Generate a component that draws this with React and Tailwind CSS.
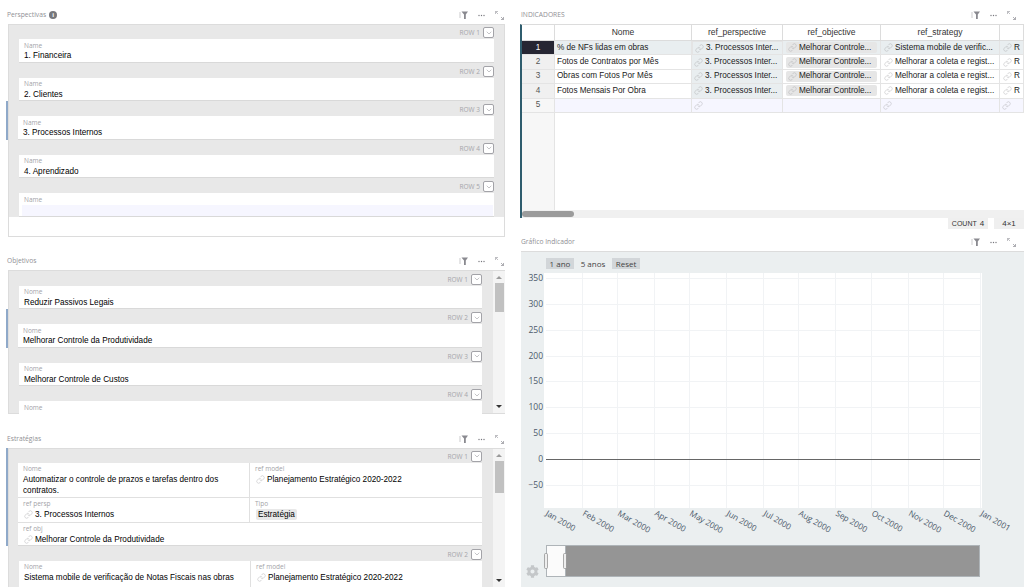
import React from "react";
import { Link, ChevronDown } from "lucide-react";
import { FaCog } from "react-icons/fa";

const sans = "font-['Liberation_Sans',Arial,sans-serif]";
const label = "font-['Open_Sans',sans-serif]";

const WidgetIcons = () => (
    <div className="flex items-center gap-[10px] text-[#929299]">
        <svg width="9" height="8" viewBox="0 0 9 8">
            <path d="M0 2h2M0 4h2M0 6h2" stroke="#b4b4b8" strokeWidth="0.700" />
            <path d="M2.500 0.500h6.500L6.800 3.500V8H5V3.500Z" fill="#8a8a90" />
        </svg>
        <svg width="7" height="3" viewBox="0 0 7 3">
            <circle cx="1" cy="1.500" r="0.700" fill="#77777d" />
            <circle cx="3.500" cy="1.500" r="0.700" fill="#77777d" />
            <circle cx="6" cy="1.500" r="0.700" fill="#77777d" />
        </svg>
        <svg width="9" height="9" viewBox="0 0 9 9" fill="none">
            <path d="M0.500 0.500H3M0.500 0.500V3M0.500 0.500L3 3" stroke="#a5a5aa" strokeWidth="0.700" />
            <path d="M8.500 8.500H6M8.500 8.500V6M8.500 8.500L6 6" stroke="#8d8d93" strokeWidth="0.700" />
        </svg>
    </div>
);

const WidgetTitle = ({ title, info, className = "pl-[7px] pr-[1px]" }) => (
    <div className={`flex h-[24px] items-center justify-between pt-[6px] ${className}`}>
        <div className={`${label} flex items-center gap-[3px] text-[6.700px] text-[#8f8f94]`}>
            {title}
            {info && (
                <span className="flex h-[8px] w-[8px] items-center justify-center rounded-full bg-[#77777c] text-[6px] font-bold leading-none text-white">
                    i
                </span>
            )}
        </div>
        <WidgetIcons />
    </div>
);

const RowStrip = ({ row }) => (
    <div className="flex h-[15px] items-end justify-end gap-[3px] pb-[1px]">
        <span className={`${label} text-[6.500px] leading-[11px] text-[#a5a5aa]`}>ROW {row}</span>
        <span className="flex h-[11px] w-[11px] items-center justify-center rounded-[2px] border border-[#a3a3a8] bg-white">
            <ChevronDown size={8} strokeWidth={1.500} className="text-[#8a8a90]" />
        </span>
    </div>
);

const Field = ({ name, value, empty, className = "" }) => (
    <div className={`flex min-w-0 flex-col px-[5px] pt-[1.500px] ${className}`}>
        <div className={`${label} h-[9px] text-[6.500px] leading-[9px] text-[#a3a3a8]`}>{name}</div>
        {empty ? (
            <div className="-ml-[2px] -mr-[4px] mt-[1px] h-[12px] bg-[#f6f6ff]" />
        ) : (
            <div className={`${sans} mt-[0.500px] text-[8.200px] leading-[11px] text-[#000]`}>{value}</div>
        )}
    </div>
);

const RefValue = ({ children }) => (
    <span className="flex items-center gap-[2px] pl-[1px]">
        <Link size={9} strokeWidth={1.100} className="shrink-0 text-[#a8a8ac]" />
        {children}
    </span>
);

const Card = ({ active, children }) => (
    <div className={`relative border-b border-[#d9d9d9] bg-white ${active ? "-ml-[1px]" : ""}`}>{children}</div>
);

const Row = ({ row, active, children }) => (
    <div className="relative pl-[10px]">
        {active && <div className="absolute -left-[3px] top-0 h-full w-[2px] bg-[#8fa9c9]" />}
        <RowStrip row={row} />
        <Card active={active}>{children}</Card>
    </div>
);

const Scrollbar = ({ thumb }) => (
    <div className="flex w-[12px] shrink-0 flex-col items-center bg-[#f4f4f4] pt-[5px]">
        <div className="h-0 w-0 border-x-[3px] border-b-[3px] border-x-transparent border-b-[#9b9b9b]" />
        <div className={`mt-[4px] w-[9px] bg-[#c1c1c1] ${thumb}`} />
        <div className="flex-1" />
        <div className="mb-[5px] h-0 w-0 border-x-[3px] border-t-[3px] border-x-transparent border-t-[#333]" />
    </div>
);

const Perspectivas = () => (
    <div className="flex h-[213px] flex-col border border-[#dcdcdc] bg-white">
        <div className="h-[192px] bg-[#e8e8e8] pr-[10px]">
            <div className="-mt-[1px]">
                {["1. Financeira", "2. Clientes", "3. Processos Internos", "4. Aprendizado", ""].map((value, i) => (
                    <Row key={i} row={i + 1} active={i === 2}>
                        <Field name="Name" value={value} empty={i === 4} className="h-[22.500px]" />
                    </Row>
                ))}
            </div>
        </div>
    </div>
);

const Objetivos = () => (
    <div className="flex h-[144px] border-y border-l border-[#dcdcdc] bg-[#e8e8e8] [clip-path:inset(0_0_0_-4px)]">
        <div className="-mt-[0.500px] flex-1 pr-[11px]">
            {["Reduzir Passivos Legais", "Melhorar Controle da Produtividade", "Melhorar Controle de Custos", ""].map((value, i) => (
                <Row key={i} row={i + 1} active={i === 1}>
                    <Field name="Nome" value={value} className="h-[22.500px]" />
                </Row>
            ))}
        </div>
        <Scrollbar thumb="h-[29px]" />
    </div>
);

const Estrategias = () => (
    <div className="flex h-[139px] border-l border-t border-[#dcdcdc] bg-[#e8e8e8] [clip-path:inset(0_0_0_-4px)]">
        <div className="-mt-[1.500px] min-w-0 flex-1 pr-[11px]">
            <Row row={1} active>
                <div className="grid grid-cols-[232px_1fr]">
                    <Field name="Nome" value="Automatizar o controle de prazos e tarefas dentro dos contratos." className="h-[35px] border-b border-r border-[#e0e0e0]" />
                    <Field name="ref model" value={<RefValue>Planejamento Estratégico 2020-2022</RefValue>} className="h-[35px] border-b border-[#e0e0e0]" />
                    <Field name="ref persp" value={<RefValue>3. Processos Internos</RefValue>} className="h-[25px] border-b border-r border-[#e0e0e0]" />
                    <Field
                        name="Tipo"
                        value={<span className="ml-[1px] inline-block rounded-[2px] bg-[#e8e8e8] px-[2px]">Estratégia</span>}
                        className="h-[25px] border-b border-[#e0e0e0]"
                    />
                    <Field name="ref obj" value={<RefValue>Melhorar Controle da Produtividade</RefValue>} className="col-span-2 h-[22px]" />
                </div>
            </Row>
            <Row row={2}>
                <div className="grid grid-cols-[232px_1fr]">
                    <Field name="Nome" value="Sistema mobile de verificação de Notas Fiscais nas obras" className="h-[35px] border-r border-[#e0e0e0]" />
                    <Field name="ref model" value={<RefValue>Planejamento Estratégico 2020-2022</RefValue>} className="h-[35px]" />
                </div>
            </Row>
        </div>
        <Scrollbar thumb="h-[32px]" />
    </div>
);

const rows = [
    ["% de NFs lidas em obras", "Sistema mobile de verific..."],
    ["Fotos de Contratos por Mês", "Melhorar a coleta e regist..."],
    ["Obras com Fotos Por Mês", "Melhorar a coleta e regist..."],
    ["Fotos Mensais Por Obra", "Melhorar a coleta e regist..."],
];

const cell = `${sans} flex h-[14.400px] items-center overflow-hidden whitespace-nowrap border-b border-r border-[#e4e4e4] text-[8.200px] text-[#1a1a1a]`;
const head = `${sans} flex h-[16px] items-center justify-center border-b border-r border-[#dcdcdc] bg-white text-[8.500px] text-[#333]`;

const Indicadores = () => (
    <div className="flex h-[194px] flex-col border-l-2 border-[#2f5d6e] border-t border-t-[#dcdcdc]">
        <div className="flex-1 overflow-hidden">
            <div className="relative grid grid-cols-[33px_137px_91px_98px_119px_24px]">
                <div className={`${head} bg-[#f7f7f7]`} />
                <div className={head}>Nome</div>
                <div className={head}>ref_perspective</div>
                <div className={head}>ref_objective</div>
                <div className={head}>ref_strategy</div>
                <div className={head} />
                {rows.map(([name, strategy], i) => {
                    const bg = i === 0 ? "bg-[#e9eef0]" : "bg-white";
                    return (
                        <React.Fragment key={i}>
                            <div className={`${cell} justify-center ${i === 0 ? "bg-[#262633] text-white" : "bg-[#f0f0f0] text-[#555]"}`}>{i + 1}</div>
                            <div className={`${cell} ${bg} pl-[2px]`}>{name}</div>
                            <div className={`${cell} bg-[#e9eef0] pl-[1px] ${i === 0 ? "border border-[#2f5d6e]" : ""}`}>
                                <RefValue>3. Processos Inter...</RefValue>
                            </div>
                            <div className={`${cell} ${bg} px-[3px]`}>
                                <div className="flex h-[11px] w-full items-center rounded-[2px] bg-[#e6e6e6] pl-[1px]">
                                    <RefValue>Melhorar Controle...</RefValue>
                                </div>
                            </div>
                            <div className={`${cell} ${bg} pl-[2px]`}>
                                <RefValue>{strategy}</RefValue>
                            </div>
                            <div className={`${cell} ${bg} pl-[2px]`}>
                                <RefValue>R</RefValue>
                            </div>
                        </React.Fragment>
                    );
                })}
                <div className={`${cell} justify-center bg-[#f7f7f7] text-[#555]`}>5</div>
                <div className={`${cell} bg-[#f6f6ff]`} />
                {[0, 1, 2, 3].map((i) => (
                    <div key={i} className={`${cell} bg-[#f6f6ff] pl-[2px]`}>
                        {i !== 1 && <Link size={9} strokeWidth={1.100} className="text-[#a8a8ac]" />}
                    </div>
                ))}
            </div>
            <div className="h-full w-[33px] border-r border-[#e4e4e4] bg-[#f7f7f7]" />
        </div>
        <div className="relative h-[8px] shrink-0 bg-[#f0f0f0]">
            <div className="absolute left-0 top-[0.500px] h-[6px] w-[52px] rounded-full bg-[#9b9b9b]" />
        </div>
    </div>
);

const Summary = () => (
    <div className={`${sans} flex h-[11px] justify-end gap-[6px] text-[8px] leading-[11px] text-[#333]`}>
        <span className="flex w-[40px] items-center justify-center gap-[3px] bg-[#efefef]">
            <span className="text-[7px]">COUNT</span> 4
        </span>
        <span className="w-[30px] bg-[#efefef] text-center">4×1</span>
    </div>
);

const gridXs = [582, 617, 654, 689, 726, 763, 798, 835, 871, 908, 943, 980];
const ticks = [
    [350, 277],
    [300, 303],
    [250, 329],
    [200, 355],
    [150, 380],
    [100, 406],
    [50, 432],
    [0, 458],
    [-50, 484],
];
const months = ["Jan 2000", "Feb 2000", "Mar 2000", "Apr 2000", "May 2000", "Jun 2000", "Jul 2000", "Aug 2000", "Sep 2000", "Oct 2000", "Nov 2000", "Dec 2000", "Jan 2001"];

// plot is drawn in page coordinates, shifted by the panel origin
const Chart = () => (
    <svg width="503" height="336" viewBox="521 251 503 336" className="absolute left-0 top-0">
        <rect x="544" y="272" width="438" height="235" fill="#fff" />
        {gridXs.map((x) => (
            <line key={x} x1={x + 0.5} x2={x + 0.5} y1="272" y2="507" stroke="#f1f3f5" strokeWidth="1" />
        ))}
        {ticks.map(([v, y]) => (
            <g key={v}>
                <line x1="546" x2="980" y1={y + 0.5} y2={y + 0.5} stroke={v === 0 ? "#666" : "#f1f3f5"} strokeWidth="1" />
                <text x="543" y={y + 3} textAnchor="end" fontSize="8.500" fill="#4b5a6b" fontFamily="Open Sans, sans-serif">
                    {v < 0 ? `−${-v}` : v}
                </text>
            </g>
        ))}
        {months.map((m, i) => {
            const x = i === 0 ? 545 : i === 12 ? 980 : gridXs[i - 1];
            return (
                <text key={i} transform={`translate(${x} 514) rotate(30)`} fontSize="8.200" fill="#4b5a6b" fontFamily="Open Sans, sans-serif">
                    {m}
                </text>
            );
        })}
        <rect x="546.500" y="544.500" width="433" height="31" fill="#959595" stroke="#aeb4b8" strokeWidth="1" />
        <rect x="546.500" y="544.500" width="19" height="31" fill="#fbfbfb" stroke="#aeb4b8" />
        <rect x="544.500" y="552.500" width="3" height="15" rx="1" fill="#eee" stroke="#8a8a8a" strokeWidth="0.700" />
        <rect x="563.500" y="552.500" width="3" height="15" rx="1" fill="#eee" stroke="#8a8a8a" strokeWidth="0.700" />
    </svg>
);

const RangeButton = ({ on, children }) => (
    <span className={`flex h-[11px] w-[28px] items-center justify-center text-[8px] text-[#444] ${on ? "bg-[#d2d6d9]" : ""}`}>{children}</span>
);

const Grafico = () => (
    <div className="relative ml-[1px] h-[336px] overflow-hidden border-t border-[#dcdcdc] bg-[#ebeff0]">
        <Chart />
        <div className={`${label} relative ml-[25px] mt-[6px] flex gap-[5px]`}>
            <RangeButton on>1 ano</RangeButton>
            <RangeButton>5 anos</RangeButton>
            <RangeButton on>Reset</RangeButton>
        </div>
        <FaCog size={13} className="absolute left-[5px] top-[313px] text-[#c4c7c9]" />
    </div>
);

export default function App() {
    return (
        <div className="flex h-[587px] w-[1024px] overflow-hidden bg-white">
            <div className="flex w-[505px] shrink-0 flex-col pl-[8px]">
                <div className="-ml-[8px]">
                    <WidgetTitle title="Perspectivas" info />
                </div>
                <Perspectivas />
                <div className="-ml-[8px] mt-[9px]">
                    <WidgetTitle title="Objetivos" />
                </div>
                <Objetivos />
                <div className="-ml-[8px] mt-[10px]">
                    <WidgetTitle title="Estratégias" />
                </div>
                <Estrategias />
            </div>
            <div className="ml-[15px] flex min-w-0 flex-1 flex-col">
                <WidgetTitle title="INDICADORES" className="pl-[1px] pr-[8px]" />
                <Indicadores />
                <Summary />
                <div className="-mt-[2px]">
                    <WidgetTitle title="Gráfico Indicador" className="pl-[1px] pr-[8px]" />
                </div>
                <Grafico />
            </div>
        </div>
    );
}
